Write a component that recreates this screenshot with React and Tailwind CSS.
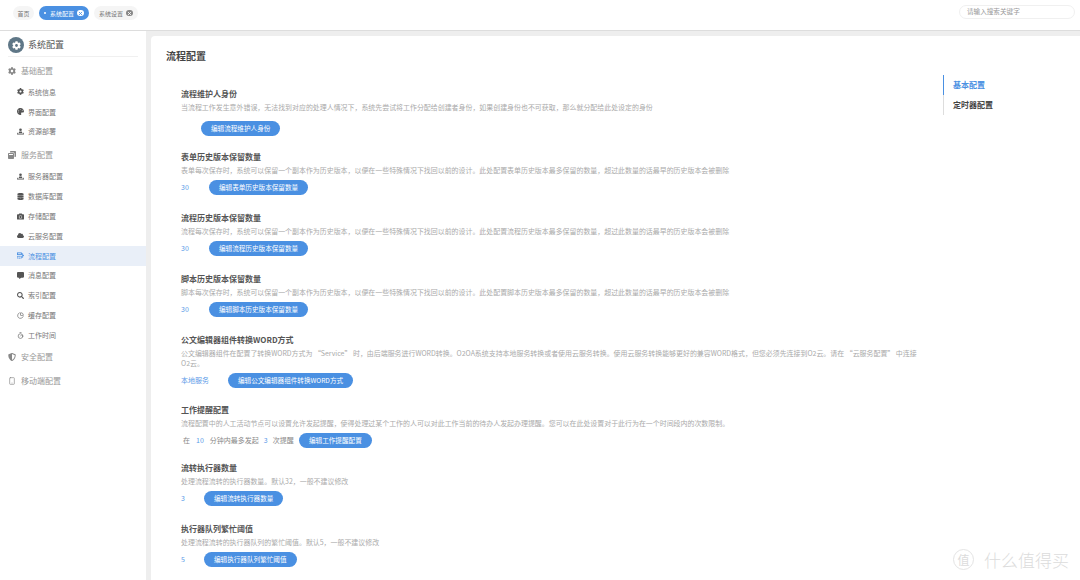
import React from "react";
import {
  FaCog, FaPalette, FaDatabase, FaCamera, FaCloud, FaCommentAlt, FaSearch, FaShieldAlt, FaWindowRestore,
} from "react-icons/fa";
import { ChartPie, Timer, Smartphone, X } from "lucide-react";

const font = "font-['Noto_Sans_CJK_SC','Noto_Sans',sans-serif]";

// person standing on a plate (资源部署 / 服务器配置)
function DeployIcon({ size, color }) {
  return (
    <svg width={size} height={size} viewBox="0 0 16 16" fill={color}>
      <circle cx="8" cy="4" r="3" />
      <path d="M5 8h6l1 4H4z" />
      <path d="M1 11h2l-.5 2h11l-.5-2h2l1 4H0z" />
    </svg>
  );
}

// two boxes joined by arrows (流程配置)
function FlowIcon({ size, color }) {
  return (
    <svg width={size} height={size} viewBox="0 0 16 16" fill="none" stroke={color} strokeWidth="2">
      <rect x="1" y="2" width="9" height="4" />
      <rect x="1" y="10" width="9" height="4" strokeDasharray="3 1" />
      <path d="M10 4h3v8h-3" />
      <path d="M13 8h3" />
    </svg>
  );
}

const groupOne = [
  { label: "系统信息", Icon: FaCog },
  { label: "界面配置", Icon: FaPalette },
  { label: "资源部署", Icon: DeployIcon },
];

const groupTwo = [
  { label: "服务器配置", Icon: DeployIcon },
  { label: "数据库配置", Icon: FaDatabase },
  { label: "存储配置", Icon: FaCamera },
  { label: "云服务配置", Icon: FaCloud },
  { label: "流程配置", Icon: FlowIcon, active: true },
  { label: "消息配置", Icon: FaCommentAlt },
  { label: "索引配置", Icon: FaSearch },
  { label: "缓存配置", Icon: ChartPie },
  { label: "工作时间", Icon: Timer },
];

function Tab({ label, active, closable, className }) {
  return (
    <div
      className={`flex h-[14px] items-center rounded-full text-[6px] ${
        active ? "bg-[#4a90e2] text-white" : "bg-[#f5f5f5] text-[#777]"
      } ${className}`}
    >
      {active && <span className="mr-[4px] h-[2px] w-[2px] rounded-full bg-white" />}
      <span>{label}</span>
      {closable && (
        <span
          className={`ml-[3px] flex h-[6.5px] w-[6.5px] items-center justify-center rounded-full ${
            active ? "bg-white text-[#4a90e2]" : "bg-[#888] text-white"
          }`}
        >
          <X size={5} strokeWidth={4} />
        </span>
      )}
    </div>
  );
}

function GroupTitle({ Icon, label, className }) {
  return (
    <div className={`flex items-center pl-[8px] text-[8px] text-[#999] ${className || ""}`}>
      <span className="flex w-[13px] items-center">
        <Icon size={8} color="#888" />
      </span>
      <span>{label}</span>
    </div>
  );
}

function MenuItem({ label, Icon, active }) {
  return (
    <div
      className={`flex h-[19.85px] items-center pl-[17px] text-[7px] ${
        active ? "bg-[#e9eff8] text-[#4a90e2]" : "text-[#777]"
      }`}
    >
      <span className="flex w-[11px] items-center">
        <Icon size={7} color={active ? "#4a90e2" : "#555"} />
      </span>
      <span>{label}</span>
    </div>
  );
}

function Sidebar() {
  return (
    <aside className="w-[146px] shrink-0 bg-white">
      <div className="mx-[8px] flex h-[26px] items-center gap-[4px] border-b border-[#f0f0f0] pt-[3px]">
        <span className="flex h-[16px] w-[16px] items-center justify-center rounded-full bg-[#5f7787]">
          <FaCog size={9} color="#fff" />
        </span>
        <span className="text-[9px] text-[#555]">系统配置</span>
      </div>
      <GroupTitle Icon={FaCog} label="基础配置" className="mt-[4px] h-[20px]" />
      <div className="mt-[1px]">
        {groupOne.map((m) => (
          <MenuItem key={m.label} {...m} />
        ))}
      </div>
      <GroupTitle Icon={FaWindowRestore} label="服务配置" className="mt-[3px] h-[20px]" />
      <div className="mt-[2px]">
        {groupTwo.map((m) => (
          <MenuItem key={m.label} {...m} />
        ))}
      </div>
      <GroupTitle Icon={FaShieldAlt} label="安全配置" className="h-[24px]" />
      <GroupTitle Icon={Smartphone} label="移动端配置" className="h-[24px]" />
    </aside>
  );
}

function Section({ title, desc, button, className, children }) {
  return (
    <section className={className}>
      <h3 className="h-[15px] text-[8px] leading-[14px] font-bold text-[#555]">{title}</h3>
      <p className="w-[745px] text-[6.95px] leading-[10px] whitespace-pre-line text-[#aaa]">{desc}</p>
      <div className="mt-[5px] flex h-[15px] items-center">
        {children}
        <button className="flex h-[15px] items-center rounded-full bg-[#4a90e2] px-[10px] text-[6.6px] text-white">
          {button}
        </button>
      </div>
    </section>
  );
}

const Value = ({ children, w }) => <span className={`text-[7px] text-[#5b9be8] ${w}`}>{children}</span>;

export default function App() {
  return (
    <div className={`relative h-[580px] w-[1080px] overflow-hidden bg-[#eeeeee] ${font}`}>
      <header className="flex h-[31px] items-start justify-between border-b border-[#ddd] bg-white pt-[6px] pr-[5px] pl-[13px]">
        <div className="flex items-center gap-[5px]">
          <Tab label="首页" className="px-[4.5px]" />
          <Tab label="系统配置" active closable className="pr-[5.5px] pl-[5px]" />
          <Tab label="系统设置" closable className="pr-[5.5px] pl-[5px]" />
        </div>
        <div className="-mt-px flex h-[14px] w-[116px] items-center rounded-full border border-[#f0f0f0] pl-[7px] text-[6.6px] text-[#999]">
          请输入搜索关键字
        </div>
      </header>

      <div className="flex h-[549px]">
        <Sidebar />
        <main className="mt-[5px] ml-[5px] flex flex-1 rounded-tl-sm bg-white pl-[15px]">
          <div className="w-[777px]">
            <h2 className="mt-[12px] text-[10px] leading-[16px] font-bold text-[#444]">流程配置</h2>
            <div className="mt-[23px] pl-[15px]">
              <Section
                title="流程维护人身份"
                desc="当流程工作发生意外错误，无法找到对应的处理人情况下，系统先尝试将工作分配给创建者身份，如果创建身份也不可获取，那么就分配给此处设定的身份"
                button="编辑流程维护人身份"
                className="[&>div]:mt-[9px] [&>div]:pl-[20px]"
              />
              <Section
                className="mt-[14px]"
                title="表单历史版本保留数量"
                desc="表单每次保存时，系统可以保留一个副本作为历史版本，以便在一些特殊情况下找回以前的设计。此处配置表单历史版本最多保留的数量，超过此数量的话最早的历史版本会被删除"
                button="编辑表单历史版本保留数量"
              >
                <Value w="w-[28px]">30</Value>
              </Section>
              <Section
                className="mt-[16px]"
                title="流程历史版本保留数量"
                desc="流程每次保存时，系统可以保留一个副本作为历史版本，以便在一些特殊情况下找回以前的设计。此处配置流程历史版本最多保留的数量，超过此数量的话最早的历史版本会被删除"
                button="编辑流程历史版本保留数量"
              >
                <Value w="w-[28px]">30</Value>
              </Section>
              <Section
                className="mt-[16px]"
                title="脚本历史版本保留数量"
                desc="脚本每次保存时，系统可以保留一个副本作为历史版本，以便在一些特殊情况下找回以前的设计。此处配置脚本历史版本最多保留的数量，超过此数量的话最早的历史版本会被删除"
                button="编辑脚本历史版本保留数量"
              >
                <Value w="w-[28px]">30</Value>
              </Section>
              <Section
                className="mt-[16px]"
                title="公文编辑器组件转换WORD方式"
                desc={"公文编辑器组件在配置了转换WORD方式为 “Service” 时，由后端服务进行WORD转换。O2OA系统支持本地服务转换或者使用云服务转换。使用云服务转换能够更好的兼容WORD格式，但您必须先连接到O2云。请在 “云服务配置” 中连接\nO2云。"}
                button="编辑公文编辑器组件转换WORD方式"
              >
                <Value w="w-[47px]">本地服务</Value>
              </Section>
              <Section
                className="mt-[15px]"
                title="工作提醒配置"
                desc="流程配置中的人工活动节点可以设置允许发起提醒，使得处理过某个工作的人可以对此工作当前的待办人发起办理提醒。您可以在此处设置对于此行为在一个时间段内的次数限制。"
                button="编辑工作提醒配置"
              >
                <div className="flex w-[118px] items-center pl-[2px] text-[7px] text-[#888]">
                  <span>在</span>
                  <span className="mx-[6px] text-[#5b9be8]">10</span>
                  <span>分钟内最多发起</span>
                  <span className="mx-[5px] text-[#5b9be8]">3</span>
                  <span>次提醒</span>
                </div>
              </Section>
              <Section
                className="mt-[13px]"
                title="流转执行器数量"
                desc="处理流程流转的执行器数量。默认32，一般不建议修改"
                button="编辑流转执行器数量"
              >
                <Value w="w-[23px]">3</Value>
              </Section>
              <Section
                className="mt-[16px]"
                title="执行器队列繁忙阈值"
                desc="处理流程流转的执行器队列的繁忙阈值。默认5，一般不建议修改"
                button="编辑执行器队列繁忙阈值"
              >
                <Value w="w-[23px]">5</Value>
              </Section>
            </div>
          </div>
          <nav className="mt-[39px] h-[40px] border-l border-[#ddd] text-[8px] font-bold">
            <div className="-ml-px flex h-[20px] items-center border-l border-[#4a90e2] pl-[9px] text-[#4a90e2]">
              基本配置
            </div>
            <div className="flex h-[20px] items-center pl-[9px] text-[#444]">定时器配置</div>
          </nav>
        </main>
      </div>

      {/* watermark */}
      <div className="absolute top-[549px] left-[953px] flex items-center gap-[10px] text-[#dcdcdc]">
        <span className="flex h-[21px] w-[21px] items-center justify-center rounded-full border border-[#e4e4e4] text-[12px]">
          值
        </span>
        <span className="text-[17px] leading-none font-light">什么值得买</span>
      </div>
    </div>
  );
}
